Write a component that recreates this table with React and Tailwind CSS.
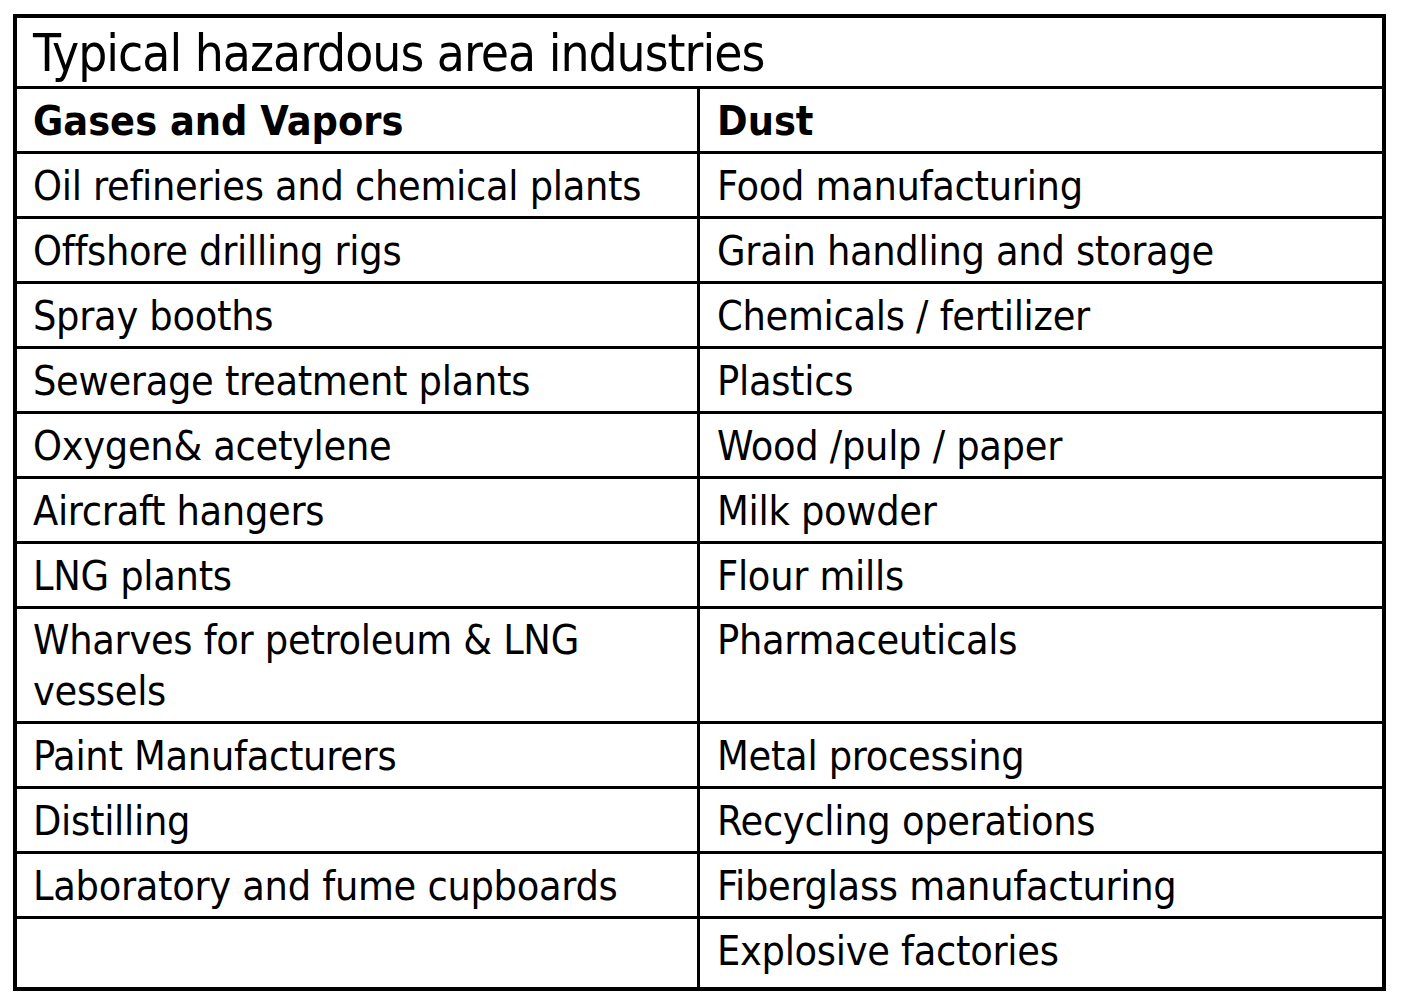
import React from "react";

const rows = [
  ["Oil refineries and chemical plants", "Food manufacturing"],
  ["Offshore drilling rigs", "Grain handling and storage"],
  ["Spray booths", "Chemicals / fertilizer"],
  ["Sewerage treatment plants", "Plastics"],
  ["Oxygen& acetylene", "Wood /pulp / paper"],
  ["Aircraft hangers", "Milk powder"],
  ["LNG plants", "Flour mills"],
];
const rows2 = [
  ["Paint Manufacturers", "Metal processing"],
  ["Distilling", "Recycling operations"],
  ["Laboratory and fume cupboards", "Fiberglass manufacturing"],
];

function Cell({ children, left }) {
  return (
    <div
      className={
        left
          ? "w-[683px] shrink-0 border-r-[3px] border-black pl-4 pt-[7px]"
          : "flex-1 pl-[17px] pt-[7px]"
      }
    >
      <span className="whitespace-nowrap">{children}</span>
    </div>
  );
}

function Row({ a, b, h = "h-[65px]", last }) {
  return (
    <div className={`flex ${h} ${last ? "" : "border-b-[3px] border-black"}`}>
      <Cell left>{a}</Cell>
      <Cell>{b}</Cell>
    </div>
  );
}

export default function App() {
  return (
    <div className="w-[1403px] h-[1008px] bg-white pt-[14px] pl-[13px]">
      <div
        className="w-[1373px] border-[4px] border-black text-black text-[41px] leading-[51px] tracking-[-0.3px]"
        style={{ fontFamily: '"DejaVu Sans Condensed", "DejaVu Sans", sans-serif', fontStretch: "condensed" }}
      >
        <div className="h-[71px] border-b-[3px] border-black pl-4 pt-[8px] text-[51px] leading-[56px] tracking-[-1px] whitespace-nowrap">
          Typical hazardous area industries
        </div>
        <div className="flex h-[65px] border-b-[3px] border-black font-bold tracking-normal">
          <Cell left>Gases and Vapors</Cell>
          <Cell>Dust</Cell>
        </div>
        {rows.map(([a, b]) => (
          <Row key={a} a={a} b={b} />
        ))}
        <div className="flex h-[115px] border-b-[3px] border-black">
          <div className="w-[683px] shrink-0 border-r-[3px] border-black pl-4 pt-[6px]">
            Wharves for petroleum &amp; LNG
            <br />
            vessels
          </div>
          <div className="flex-1 pl-[17px] pt-[6px]">Pharmaceuticals</div>
        </div>
        {rows2.map(([a, b]) => (
          <Row key={a} a={a} b={b} />
        ))}
        <Row a="" b="Explosive factories" h="h-[68px]" last />
      </div>
    </div>
  );
}
